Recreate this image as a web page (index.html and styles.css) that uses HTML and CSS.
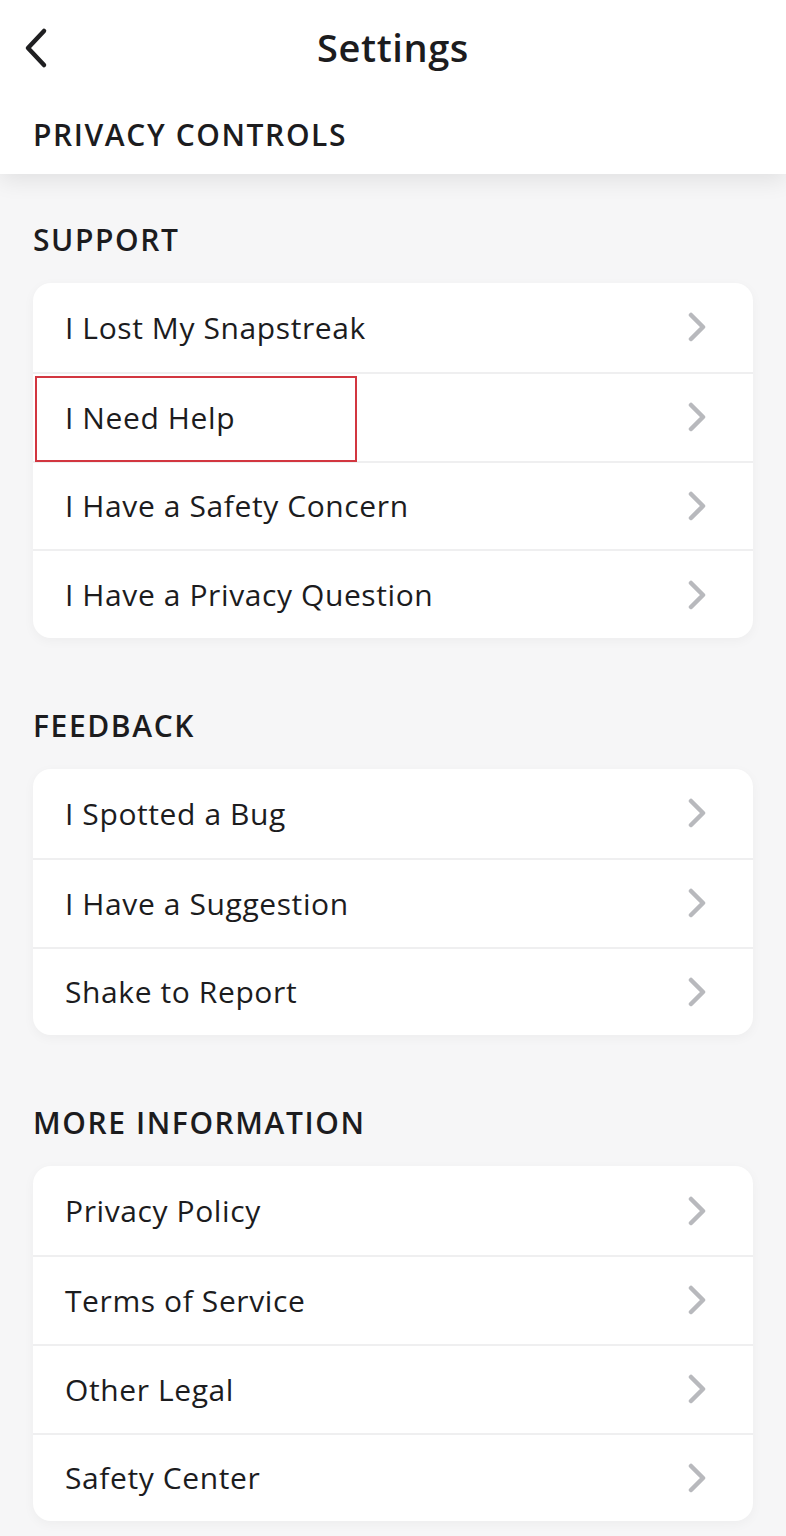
FILE: index.html
```html
<!DOCTYPE html>
<html lang="en">
<head>
    <meta charset="UTF-8">
    <meta name="viewport" content="width=device-width, initial-scale=1.0">
    <title>Settings</title>
    <link rel="stylesheet" href="styles.css">
</head>
<body>

    <header class="top">
        <div class="nav">
            <svg class="back" width="24" height="42" viewBox="0 0 24 42">
                <polyline points="20,4 4,21 20,38" fill="none" stroke="#1f1f21" stroke-width="4.5" stroke-linecap="round" stroke-linejoin="round"/>
            </svg>
            <h1>Settings</h1>
        </div>
        <div class="privacy">PRIVACY CONTROLS</div>
    </header>

    <main class="content">
        <h2>SUPPORT</h2>
        <ul class="card">
            <li>I Lost My Snapstreak<svg class="chev" width="18" height="30" viewBox="0 0 18 30"><polyline points="3,3 15,15 3,27" /></svg></li>
            <li class="marked">I Need Help<span class="mark"></span><svg class="chev" width="18" height="30" viewBox="0 0 18 30"><polyline points="3,3 15,15 3,27" /></svg></li>
            <li>I Have a Safety Concern<svg class="chev" width="18" height="30" viewBox="0 0 18 30"><polyline points="3,3 15,15 3,27" /></svg></li>
            <li>I Have a Privacy Question<svg class="chev" width="18" height="30" viewBox="0 0 18 30"><polyline points="3,3 15,15 3,27" /></svg></li>
        </ul>

        <h2>FEEDBACK</h2>
        <ul class="card">
            <li>I Spotted a Bug<svg class="chev" width="18" height="30" viewBox="0 0 18 30"><polyline points="3,3 15,15 3,27" /></svg></li>
            <li>I Have a Suggestion<svg class="chev" width="18" height="30" viewBox="0 0 18 30"><polyline points="3,3 15,15 3,27" /></svg></li>
            <li>Shake to Report<svg class="chev" width="18" height="30" viewBox="0 0 18 30"><polyline points="3,3 15,15 3,27" /></svg></li>
        </ul>

        <h2>MORE INFORMATION</h2>
        <ul class="card">
            <li>Privacy Policy<svg class="chev" width="18" height="30" viewBox="0 0 18 30"><polyline points="3,3 15,15 3,27" /></svg></li>
            <li>Terms of Service<svg class="chev" width="18" height="30" viewBox="0 0 18 30"><polyline points="3,3 15,15 3,27" /></svg></li>
            <li>Other Legal<svg class="chev" width="18" height="30" viewBox="0 0 18 30"><polyline points="3,3 15,15 3,27" /></svg></li>
            <li>Safety Center<svg class="chev" width="18" height="30" viewBox="0 0 18 30"><polyline points="3,3 15,15 3,27" /></svg></li>
        </ul>
    </main>

</body>
</html>
```

FILE: styles.css
```css
body { margin: 0; background: #f6f6f7; color: #1c1c1e; font-family: "Open Sans", Lato, sans-serif; }

.top { background: #fff; height: 174px; box-shadow: 0 6px 22px rgba(0,0,0,0.09); position: relative; z-index: 1; }
.nav { height: 94px; display: flex; align-items: center; justify-content: center; position: relative; }
.back { position: absolute; left: 24px; top: 27px; }
.nav h1 { margin: 0; font-size: 38px; font-weight: 600; letter-spacing: 0.6px; }
.privacy { height: 80px; display: flex; align-items: center; padding-left: 33px; font-size: 30px; font-weight: 600; letter-spacing: 1.6px; }

.content { padding: 0 33px 16px; }
.content h2 { margin: 46px 0 23px; height: 40px; line-height: 40px; font-size: 30px; font-weight: 600; letter-spacing: 1.6px; }
.card + h2 { margin-top: 68px; }

.card { list-style: none; margin: 0; padding: 0; background: #fff; border-radius: 18px; box-shadow: 0 3px 12px rgba(0,0,0,0.04); }
.card li { position: relative; box-sizing: border-box; height: 88.75px; display: flex; align-items: center; justify-content: space-between; padding: 0 47px 0 32px; font-size: 30px; letter-spacing: 0.6px; border-top: 2px solid #efeff0; }
.card li:first-child { border-top: none; }

.chev polyline { fill: none; stroke: #b8b9bd; stroke-width: 4.5; stroke-linecap: round; stroke-linejoin: round; }

.mark { position: absolute; z-index: 1; left: 2px; top: 2px; width: 322px; height: 86px; box-sizing: border-box; border: 2px solid #d23640; }
```
